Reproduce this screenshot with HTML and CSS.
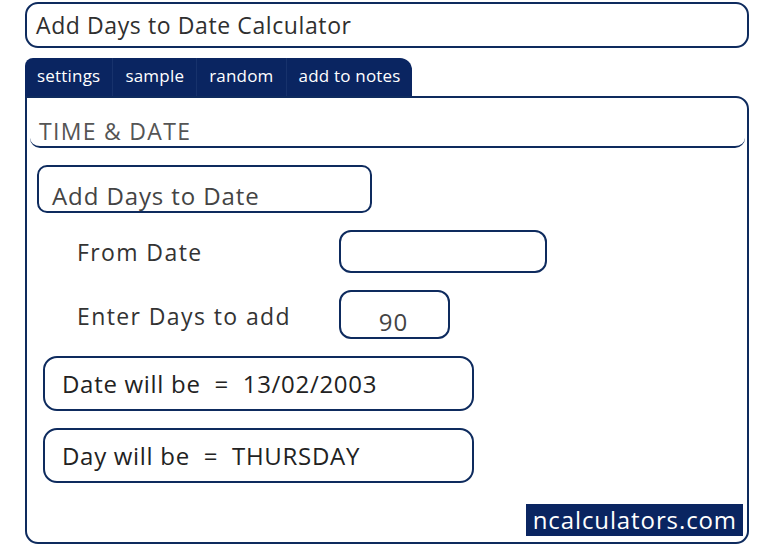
FILE: index.html
```html
<!DOCTYPE html>
<html>
<head>
<meta charset="utf-8">
<link rel="stylesheet" href="styles.css">
</head>
<body>
<div class="page">
  <div class="title">Add Days to Date Calculator</div>
  <div class="tabs">
    <span class="tab">settings</span>
    <span class="tab">sample</span>
    <span class="tab">random</span>
    <span class="tab last">add to notes</span>
  </div>
  <div class="panel">
    <div class="section">TIME &amp; DATE</div>
    <div class="sub">Add Days to Date</div>
    <div class="row">
      <span class="label">From Date</span>
      <span class="input wide"></span>
    </div>
    <div class="row row2">
      <span class="label">Enter Days to add</span>
      <span class="input small">90</span>
    </div>
    <div class="result">Date will be&nbsp; = &nbsp;13/02/2003</div>
    <div class="result">Day will be&nbsp; = &nbsp;THURSDAY</div>
    <div class="brand-row"><span class="brand">ncalculators.com</span></div>
  </div>
</div>
</body>
</html>
```
FILE: styles.css
```css
html, body { margin: 0; padding: 0; background: #fff; }
body { font-family: "Open Sans", "DejaVu Sans", sans-serif; color: #333; }
.page { width: 724px; margin-left: 25px; padding-top: 2px; }
.title {
  height: 46px; box-sizing: border-box; border: 2px solid #0e2b5e; border-radius: 13px;
  font-size: 23px; letter-spacing: 0.6px; line-height: 42px; padding-left: 9px; color: #2f2f2f;
}
.tabs {
  margin-top: 10px; width: 387px; height: 38px; background: #0a2561;
  border-radius: 8px 12px 0 0; display: flex; align-items: stretch;
}
.tab {
  color: #fff; font-size: 17px; letter-spacing: 0.2px; line-height: 36px; white-space: nowrap;
  padding: 0 12px; border-right: 1px solid #17326c;
}
.tab.last { border-right: none; }
.panel {
  border: 2px solid #0e2b5e; border-radius: 0 13px 13px 13px;
  height: 448px; box-sizing: border-box; padding: 0 2px 0 3px;
}
.section {
  font-size: 23px; letter-spacing: 1.3px; color: #555; height: 50px;
  line-height: 66px; padding-left: 9px; border-bottom: 2px solid #0e2b5e;
  border-radius: 0 0 10px 10px; box-sizing: border-box;
}
.sub {
  margin: 17px 0 0 7px; width: 335px; height: 48px; border: 2px solid #0e2b5e;
  border-radius: 10px; font-size: 24px; letter-spacing: 0.9px; color: #444; padding-left: 13px;
  line-height: 58px; box-sizing: border-box; overflow: hidden;
}
.row { display: flex; align-items: center; margin-top: 17px; height: 43px; }
.row2 { margin-top: 17px; height: 49px; }
.label { width: 262px; padding-left: 47px; font-size: 23px; letter-spacing: 1.4px; color: #333; }
.input { border: 2px solid #0e2b5e; border-radius: 12px; box-sizing: border-box; display: block; }
.wide { width: 208px; height: 43px; }
.small {
  width: 111px; height: 49px; font-size: 24px; letter-spacing: 1px; color: #444;
  text-align: center; line-height: 60px; padding-right: 2px;
}
.row2 .label { margin-top: 3px; }
.result {
  margin: 17px 0 0 13px; width: 431px; height: 55px; border: 2px solid #0e2b5e;
  border-radius: 14px; box-sizing: border-box; font-size: 24px; letter-spacing: 0.7px;
  padding-left: 17px; line-height: 51px; color: #222;
}
.result + .result { margin-top: 17px; }
.brand-row { display: flex; justify-content: flex-end; margin-top: 21px; padding-right: 2px; }
.brand {
  background: #0a2561; color: #fff; font-size: 24px; letter-spacing: 0.9px;
  height: 32px; line-height: 32px; padding: 0 6px 0 7px;
}
```
